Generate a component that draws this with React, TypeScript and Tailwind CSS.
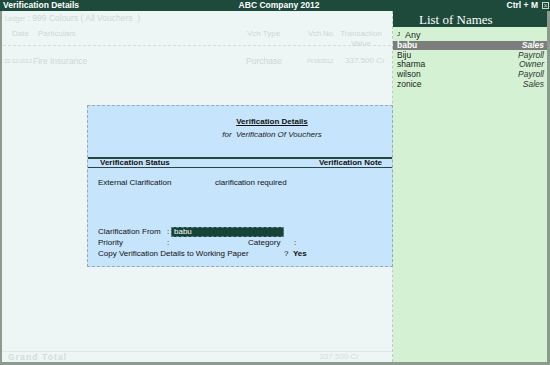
import React from "react";

const names = [
  { name: "babu", type: "Sales", active: true },
  { name: "Biju", type: "Payroll" },
  { name: "sharma", type: "Owner" },
  { name: "wilson", type: "Payroll" },
  { name: "zonice", type: "Sales" },
];

const dotted =
  "bg-[#1d4a3b] bg-[radial-gradient(#2f6a55_0.6px,transparent_0.7px)] bg-[length:2px_2px]";

export default function App() {
  return (
    <div className="w-[550px] h-[365px] flex flex-col bg-[#8d9b8f] font-['Liberation_Sans',Arial,sans-serif] text-[8px] overflow-hidden whitespace-nowrap">
      {/* title bar */}
      <div className={`h-[11px] flex items-center justify-between pl-[3px] pr-[1px] text-white font-bold text-[8.5px] leading-none ${dotted}`}>
        <span className="w-[150px]">Verification Details</span>
        <span className="ml-[6px]">ABC Company 2012</span>
        <span className="w-[150px] flex justify-end items-center gap-[4px]">
          Ctrl + M
          <span className="w-[7px] h-[7px] border border-[#c8d8d0] flex items-center justify-center text-[7px] font-normal text-[#c8d8d0]">×</span>
        </span>
      </div>

      <div className="flex-1 flex relative">
        {/* left panel */}
        <div className="w-[391px] shrink-0 ml-[2px] mb-[3px] bg-[#eef6f5] flex flex-col text-[#cdd6d6] border-r border-dashed border-[#c0c8c8] text-[8.5px]">
          <div className="h-[12px] pl-[3px] pt-[3px] leading-none">
            <span className="text-[6.5px]">Ledger</span> : 999 Colours ( All Vouchers&nbsp; )
          </div>
          <div className="h-[23px] flex pt-[6px] leading-[10px] border-b border-dashed border-[#d4dcdc] mx-[1px] text-[8px]">
            <span className="w-[35px] shrink-0 pl-[9px]">Date</span>
            <span className="w-[209px] shrink-0">Particulars</span>
            <span className="w-[61px] shrink-0">Vch Type</span>
            <span className="w-[30px] shrink-0 tracking-[-0.3px]">Vch No.</span>
            <span className="w-[46px] shrink-0 text-center">Transaction<br />Value</span>
          </div>
          <div className="flex items-center pt-[11px] leading-none">
            <span className="w-[31px] shrink-0 pl-[2px] text-[6px] tracking-[-0.3px]">22-12-2012</span>
            <span className="w-[213px] shrink-0">Fire Insurance</span>
            <span className="w-[61px] shrink-0">Purchase</span>
            <span className="w-[38px] shrink-0 text-[6px] tracking-[-0.3px]">PI/18/2012</span>
            <span className="text-[8px]">337.500 Cr</span>
          </div>
          <div className="flex-1" />
          <div className="h-[11px] border-t border-[#dfe6e6] flex items-center justify-between px-[6px] text-[#d5dcdc] leading-none">
            <span className="tracking-[1.1px] font-bold">Grand Total</span>
            <span className="pr-[27px] text-[8px]">337.500 Cr</span>
          </div>
        </div>

        {/* list of names */}
        <div className="flex-1 flex flex-col mb-[3px] mr-[3px] bg-[#d4f2d3] text-[#1a1a1a] text-[8.5px] leading-none">
          <div className={`h-[16px] flex items-center pl-[26px] text-white text-[13px] font-['Liberation_Serif',serif] ${dotted}`}>
            List of Names
          </div>
          <div className="h-[14px] flex items-center pl-[4px] pt-[3px]">
            <span className="text-[6px] -mt-[3px] mr-[5px]">J</span>
            <span className="text-[9px]">Any</span>
          </div>
          {names.map((n) => (
            <div
              key={n.name}
              className={`flex items-center justify-between pl-[4px] pr-[3px] ${n.active ? "bg-[#7d7d7d] text-white font-bold h-[9px]" : "h-[9.5px] mt-[0.2px]"}`}
            >
              <span>{n.name}</span>
              <span className={`italic ${n.active ? "" : "text-[#333]"}`}>{n.type}</span>
            </div>
          ))}
        </div>

        {/* verification modal */}
        <div className="absolute left-[87px] top-[94px] w-[306px] h-[162px] bg-[#c6e4fb] border border-dashed border-[#9aa8b4] flex flex-col text-[#111] leading-none">
          <div className="h-[51px] flex flex-col items-center pl-[64px] pt-[12px]">
            <span className="font-bold underline">Verification Details</span>
            <span className="italic mt-[5px] text-[#222]">for&nbsp; Verification Of Vouchers</span>
          </div>
          <div className="border-t-2 border-[#29473f] h-[10px] flex items-center justify-between pl-[12px] pr-[10px] font-bold">
            <span>Verification Status</span>
            <span>Verification Note</span>
          </div>
          <div className="border-t border-[#29473f]" />
          <div className="flex pl-[10px] pt-[11px]">
            <span className="w-[117px] shrink-0">External Clarification</span>
            <span>clarification required</span>
          </div>
          <div className="flex-1" />
          <div className="pl-[10px] pb-[7px] flex flex-col gap-[1px]">
            <div className="flex items-center h-[10px]">
              <span className="w-[69px] shrink-0">Clarification From</span>
              <span className="w-[4px] shrink-0">:</span>
              <span className="w-[113px] shrink-0 h-[10px] bg-[#164438] text-white pl-[2px] flex items-center border border-dashed border-[#5d7d72]">babu</span>
            </div>
            <div className="flex items-center h-[9px]">
              <span className="w-[69px] shrink-0">Priority</span>
              <span className="w-[81px] shrink-0">:</span>
              <span className="w-[46px] shrink-0">Category</span>
              <span>:</span>
            </div>
            <div className="flex items-center h-[10px] mt-[1px]">
              <span className="w-[186px] shrink-0">Copy Verification Details to Working Paper</span>
              <span>?&nbsp; <span className="font-bold">Yes</span></span>
            </div>
          </div>
        </div>
      </div>
    </div>
  );
}
